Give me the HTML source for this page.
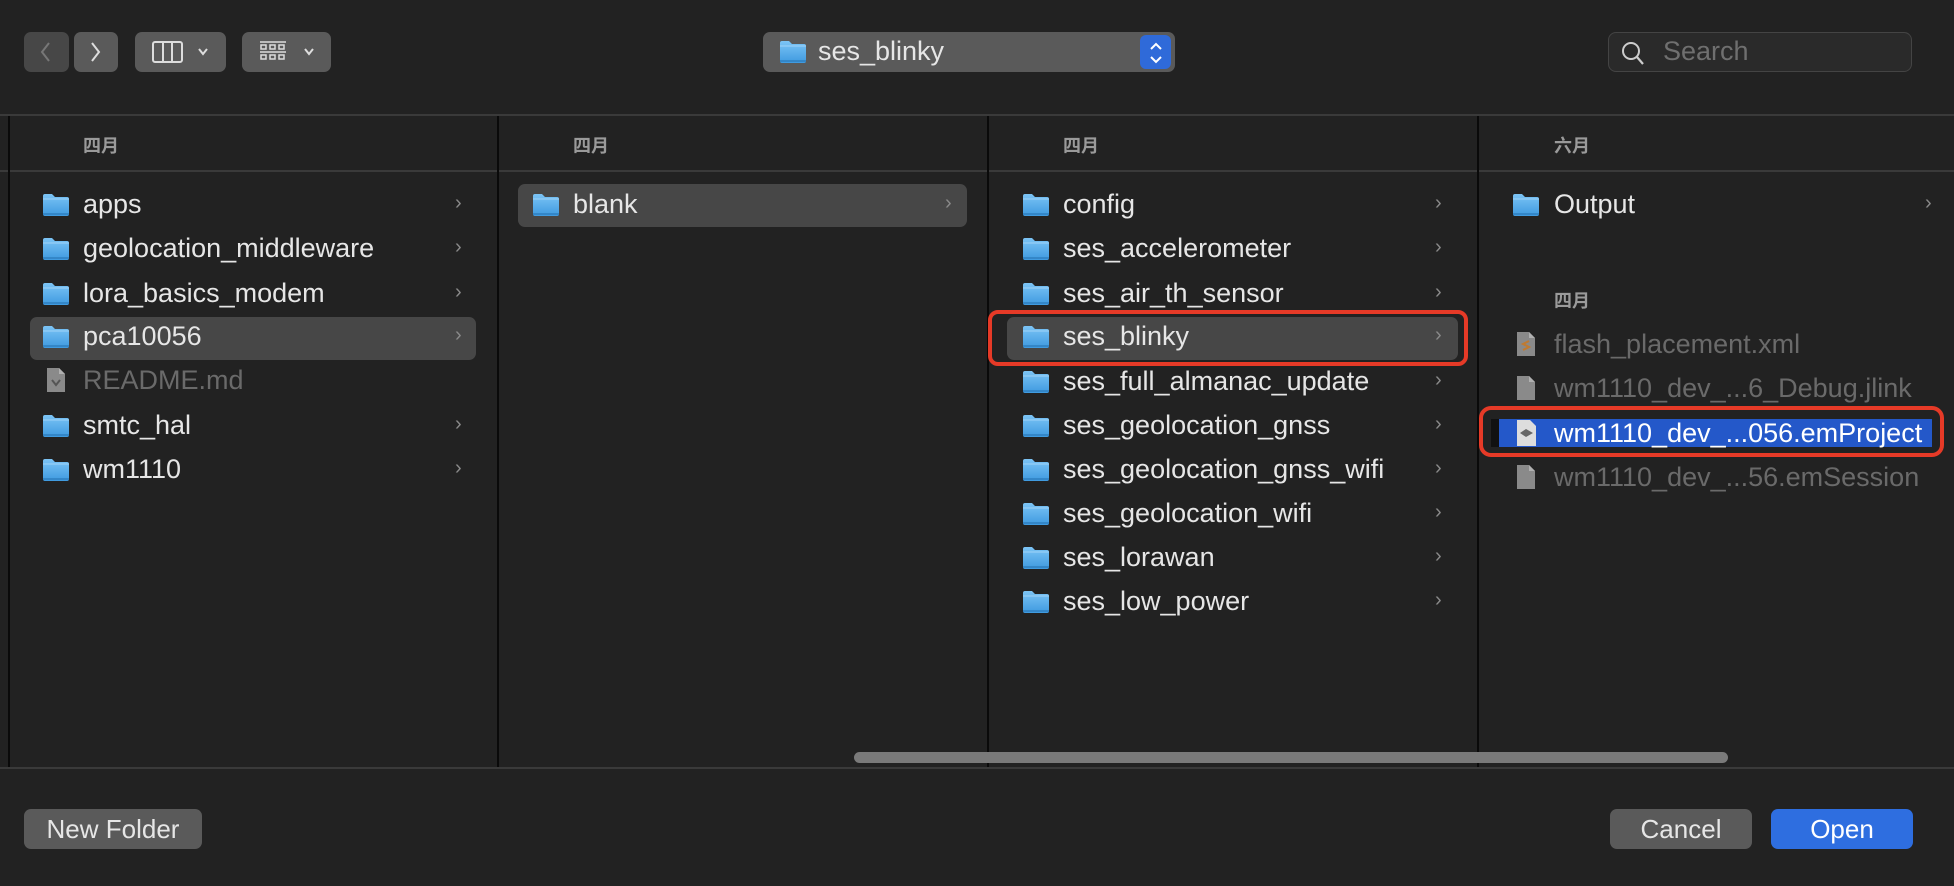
<!DOCTYPE html>
<html><head><meta charset="utf-8"><style>
*{margin:0;padding:0;box-sizing:border-box}
body{width:1954px;height:886px;background:#222222;position:relative;overflow:hidden;font-family:"Liberation Sans","Noto Sans CJK SC",sans-serif;color:#e6e6e6}
.a{position:absolute}
.btn{position:absolute;background:#5a5a5a;border-radius:7px}
.hl{position:absolute;background:#474747;border-radius:7px}
.vl{position:absolute;top:116px;width:2px;height:652px;background:#0a0a0a}
.row{position:absolute;font-size:27px;line-height:30px;white-space:nowrap;margin-top:0}
.hd{position:absolute;top:132px;font-size:18px;color:#9a9a9a;font-weight:bold}
.chev{position:absolute;font-size:20px;color:#8a8a8a;margin-top:1px}
.fold{position:absolute;width:28px;height:24px;margin-top:0}
.dim{color:#6a6a6a}
.bt{font-size:26px;line-height:40px;text-align:center}
</style></head><body>
<svg width="0" height="0" style="position:absolute"><defs>
<linearGradient id="fg" x1="0" y1="0" x2="0" y2="1"><stop offset="0" stop-color="#7cc4f5"/><stop offset="1" stop-color="#3e9ae0"/></linearGradient>
<symbol id="f" viewBox="0 0 28 24"><path d="M1 3a2 2 0 0 1 2-2h7l3 3h12a2 2 0 0 1 2 2v15a2 2 0 0 1-2 2H3a2 2 0 0 1-2-2z" fill="url(#fg)"/><path d="M1 6h26" stroke="#9fd4f8" stroke-width="1"/><path d="M1 21h26" stroke="#2f7fc0" stroke-width="1.5"/></symbol>
<symbol id="d" viewBox="0 0 20 26"><path d="M1 1h12l6 6v18H1z" fill="#8a8a8a"/><path d="M13 1v6h6" fill="#b0b0b0"/></symbol>
</defs></svg>

<div class="btn" style="left:24px;top:32px;width:45px;height:40px;background:#474747"></div>
<svg class="a" style="left:38px;top:40px" width="16" height="24"><path d="M11 3L4 12l7 9" stroke="#777" stroke-width="2" fill="none"/></svg>
<div class="btn" style="left:74px;top:32px;width:44px;height:40px"></div>
<svg class="a" style="left:88px;top:40px" width="16" height="24"><path d="M4 3l7 9-7 9" stroke="#ddd" stroke-width="2" fill="none"/></svg>
<div class="btn" style="left:135px;top:32px;width:91px;height:40px"></div>
<svg class="a" style="left:152px;top:40px" width="60" height="24"><rect x="1" y="2" width="29" height="20" rx="2" stroke="#ddd" stroke-width="2" fill="none"/><path d="M11 2v20M20 2v20" stroke="#ddd" stroke-width="2"/><path d="M47 9l4 5 4-5" stroke="#ddd" stroke-width="2" fill="none"/></svg>
<div class="btn" style="left:242px;top:32px;width:89px;height:40px"></div>
<svg class="a" style="left:258px;top:40px" width="62" height="24"><g stroke="#ddd" stroke-width="1.5" fill="none"><path d="M2 2h26M2 12h26"/><rect x="3" y="5" width="5" height="4"/><rect x="12" y="5" width="5" height="4"/><rect x="21" y="5" width="5" height="4"/><rect x="3" y="15" width="5" height="4"/><rect x="12" y="15" width="5" height="4"/><rect x="21" y="15" width="5" height="4"/></g><path d="M47 9l4 5 4-5" stroke="#ddd" stroke-width="2" fill="none"/></svg>

<div class="btn" style="left:763px;top:32px;width:412px;height:40px"></div>
<svg class="a" style="left:779px;top:39px" width="28" height="26"><use href="#f"/></svg>
<div class="row" style="left:818px;top:36px">ses_blinky</div>
<div class="a" style="left:1140px;top:35px;width:31px;height:34px;background:#2f6ad9;border-radius:6px"></div>
<svg class="a" style="left:1146px;top:38px" width="20" height="30"><path d="M5 11l5-5 5 5M5 19l5 5 5-5" stroke="#fff" stroke-width="2" fill="none"/></svg>

<div class="a" style="left:1608px;top:32px;width:304px;height:40px;border:1px solid #444;border-radius:8px;background:#2a2a2a"></div>
<svg class="a" style="left:1620px;top:40px" width="26" height="26"><circle cx="11" cy="11" r="8" stroke="#ccc" stroke-width="2" fill="none"/><path d="M17 17l6 7" stroke="#ccc" stroke-width="2.2"/></svg>
<div class="row" style="left:1663px;top:36px;color:#6f6f6f">Search</div>

<div class="a" style="left:0;top:114px;width:1954px;height:2px;background:#3a3a3a"></div>
<div class="a" style="left:0;top:170px;width:1954px;height:2px;background:#3a3a3a"></div>
<div class="vl" style="left:8px"></div><div class="vl" style="left:497px"></div><div class="vl" style="left:987px"></div><div class="vl" style="left:1477px"></div>

<div class="hd" style="left:83px">四月</div>
<div class="hd" style="left:573px">四月</div>
<div class="hd" style="left:1063px">四月</div>
<div class="hd" style="left:1554px">六月</div>

<div class="hl" style="left:30px;top:317px;width:446px;height:43px"></div>
<svg class="fold" style="left:42px;top:193px"><use href="#f"/></svg><div class="row" style="left:83px;top:189px">apps</div><div class="chev" style="left:455px;top:191px">›</div>
<svg class="fold" style="left:42px;top:237px"><use href="#f"/></svg><div class="row" style="left:83px;top:233px">geolocation_middleware</div><div class="chev" style="left:455px;top:235px">›</div>
<svg class="fold" style="left:42px;top:282px"><use href="#f"/></svg><div class="row" style="left:83px;top:278px">lora_basics_modem</div><div class="chev" style="left:455px;top:280px">›</div>
<svg class="fold" style="left:42px;top:325px"><use href="#f"/></svg><div class="row" style="left:83px;top:321px">pca10056</div><div class="chev" style="left:455px;top:323px">›</div>
<svg class="a" style="left:46px;top:367px" width="20" height="26"><use href="#d"/><path d="M6 13l4 5 4-5" stroke="#555" stroke-width="2" fill="none"/></svg><div class="row dim" style="left:83px;top:365px">README.md</div>
<svg class="fold" style="left:42px;top:414px"><use href="#f"/></svg><div class="row" style="left:83px;top:410px">smtc_hal</div><div class="chev" style="left:455px;top:412px">›</div>
<svg class="fold" style="left:42px;top:458px"><use href="#f"/></svg><div class="row" style="left:83px;top:454px">wm1110</div><div class="chev" style="left:455px;top:456px">›</div>

<div class="hl" style="left:518px;top:184px;width:449px;height:43px"></div>
<svg class="fold" style="left:532px;top:193px"><use href="#f"/></svg><div class="row" style="left:573px;top:189px">blank</div><div class="chev" style="left:945px;top:191px">›</div>

<div class="hl" style="left:1007px;top:317px;width:451px;height:43px"></div>
<div class="a" style="left:988px;top:310px;width:480px;height:56px;border:4px solid #e63a27;border-radius:10px"></div>
<svg class="fold" style="left:1022px;top:193px"><use href="#f"/></svg><div class="row" style="left:1063px;top:189px">config</div><div class="chev" style="left:1435px;top:191px">›</div>
<svg class="fold" style="left:1022px;top:237px"><use href="#f"/></svg><div class="row" style="left:1063px;top:233px">ses_accelerometer</div><div class="chev" style="left:1435px;top:235px">›</div>
<svg class="fold" style="left:1022px;top:282px"><use href="#f"/></svg><div class="row" style="left:1063px;top:278px">ses_air_th_sensor</div><div class="chev" style="left:1435px;top:280px">›</div>
<svg class="fold" style="left:1022px;top:325px"><use href="#f"/></svg><div class="row" style="left:1063px;top:321px">ses_blinky</div><div class="chev" style="left:1435px;top:323px">›</div>
<svg class="fold" style="left:1022px;top:370px"><use href="#f"/></svg><div class="row" style="left:1063px;top:366px">ses_full_almanac_update</div><div class="chev" style="left:1435px;top:368px">›</div>
<svg class="fold" style="left:1022px;top:414px"><use href="#f"/></svg><div class="row" style="left:1063px;top:410px">ses_geolocation_gnss</div><div class="chev" style="left:1435px;top:412px">›</div>
<svg class="fold" style="left:1022px;top:458px"><use href="#f"/></svg><div class="row" style="left:1063px;top:454px">ses_geolocation_gnss_wifi</div><div class="chev" style="left:1435px;top:456px">›</div>
<svg class="fold" style="left:1022px;top:502px"><use href="#f"/></svg><div class="row" style="left:1063px;top:498px">ses_geolocation_wifi</div><div class="chev" style="left:1435px;top:500px">›</div>
<svg class="fold" style="left:1022px;top:546px"><use href="#f"/></svg><div class="row" style="left:1063px;top:542px">ses_lorawan</div><div class="chev" style="left:1435px;top:544px">›</div>
<svg class="fold" style="left:1022px;top:590px"><use href="#f"/></svg><div class="row" style="left:1063px;top:586px">ses_low_power</div><div class="chev" style="left:1435px;top:588px">›</div>

<svg class="fold" style="left:1512px;top:193px"><use href="#f"/></svg><div class="row" style="left:1554px;top:189px">Output</div><div class="chev" style="left:1925px;top:191px">›</div>
<div class="hd" style="left:1554px;top:287px">四月</div>
<svg class="a" style="left:1516px;top:331px" width="20" height="26"><use href="#d"/><path d="M13 10l-6 3 6 3-6 3" stroke="#c07a30" stroke-width="2" fill="none"/></svg><div class="row dim" style="left:1554px;top:329px">flash_placement.xml</div>
<svg class="a" style="left:1516px;top:375px" width="20" height="26"><use href="#d"/></svg><div class="row dim" style="left:1554px;top:373px">wm1110_dev_...6_Debug.jlink</div>
<div class="a" style="left:1479px;top:406px;width:465px;height:51px;border:4px solid #e63a27;border-radius:12px"></div>
<div class="a" style="left:1491px;top:419px;width:8px;height:28px;background:#111"></div>
<div class="a" style="left:1499px;top:419px;width:433px;height:28px;background:#2458c9"></div>
<svg class="a" style="left:1516px;top:419px" width="22" height="28"><path d="M1 1h13l6 6v20H1z" fill="#ddd"/><path d="M4 14l6-4 7 4-7 4z" fill="#666"/></svg><div class="row" style="left:1554px;top:418px;color:#fff">wm1110_dev_...056.emProject</div>
<svg class="a" style="left:1516px;top:464px" width="20" height="26"><use href="#d"/></svg><div class="row dim" style="left:1554px;top:462px">wm1110_dev_...56.emSession</div>

<div class="a" style="left:854px;top:752px;width:874px;height:11px;background:#7a7a7a;border-radius:6px"></div>
<div class="a" style="left:0;top:767px;width:1954px;height:2px;background:#3a3a3a"></div>

<div class="btn bt" style="left:24px;top:809px;width:178px;height:40px">New Folder</div>
<div class="btn bt" style="left:1610px;top:809px;width:142px;height:40px">Cancel</div>
<div class="btn bt" style="left:1771px;top:809px;width:142px;height:40px;background:#2e6ee0;color:#fff">Open</div>
</body></html>
